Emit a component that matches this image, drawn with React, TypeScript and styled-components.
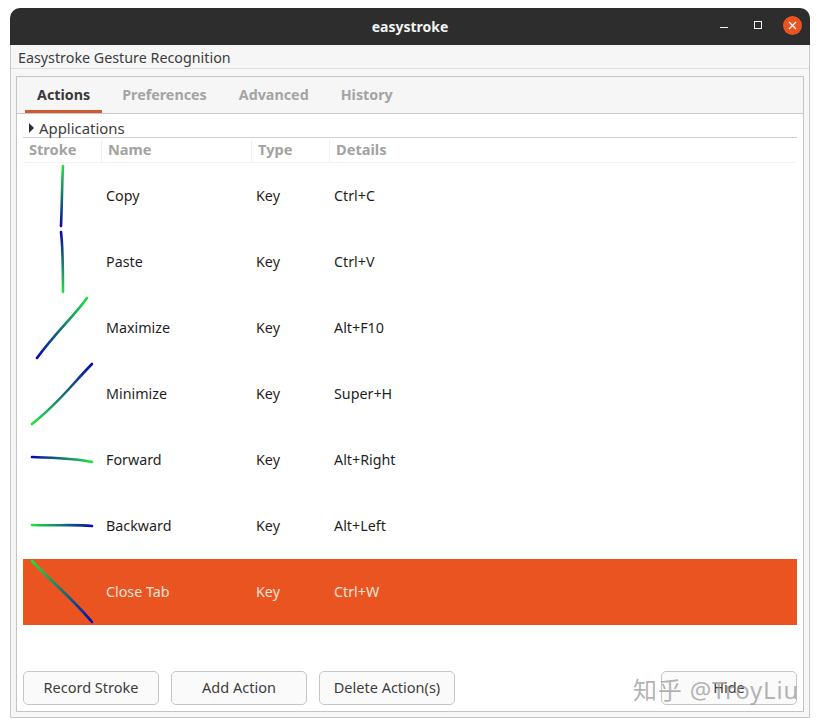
import styled, { createGlobalStyle } from "styled-components";

const GlobalStyle = createGlobalStyle`
  html, body {
    margin: 0;
    padding: 0;
    background: #ffffff;
    font-family: "Noto Sans", "Open Sans", sans-serif;
  }
`;

const Page = styled.div`
  position: relative;
  width: 820px;
  height: 728px;
  padding: 8px 10px 10px;
  box-sizing: border-box;
`;

const Window = styled.div`
  display: flex;
  flex-direction: column;
  height: 710px;
  box-sizing: border-box;
  background: #f6f6f6;
  border: 1px solid #c9c9c9;
  border-top: none;
  border-radius: 12px 12px 0 0;
`;

const TitleBar = styled.div`
  position: relative;
  flex: 0 0 37px;
  margin: 0 -1px;
  display: flex;
  align-items: center;
  justify-content: center;
  background: #2d2d2d;
  border-radius: 10px 10px 0 0;
  color: #f2f2f2;
  font-size: 14px;
  font-weight: 700;
`;

const WindowControls = styled.div`
  position: absolute;
  right: 8px;
  top: 8px;
  display: flex;
  align-items: center;
  gap: 15px;
`;

const ControlButton = styled.div`
  width: 19px;
  height: 19px;
  display: flex;
  align-items: center;
  justify-content: center;
`;

const CloseButton = styled(ControlButton)`
  background: #e95420;
  border-radius: 50%;
`;

const MenuBar = styled.div`
  flex: 0 0 24px;
  min-height: 0;
  box-sizing: border-box;
  padding-left: 7px;
  border-bottom: 1px solid #dfdfdf;
  color: #3d3d3d;
  font-size: 14.3px;
  line-height: 25px;
`;

const Notebook = styled.div`
  flex: 1;
  display: flex;
  flex-direction: column;
  margin: 7px 5px 5px;
  border: 1px solid #c4c4c4;
  background: #ffffff;
`;

const TabBar = styled.div`
  flex: 0 0 36px;
  display: flex;
  padding-left: 8px;
  background: #f6f6f6;
  border-bottom: 1px solid #c8c8c8;
`;

const Tab = styled.div<{ $active?: boolean }>`
  box-sizing: border-box;
  height: 36px;
  margin-right: ${({ $active }) => ($active ? "4px" : "0")};
  padding: 0 ${({ $active }) => ($active ? "12px" : "16px")};
  border-bottom: 3px solid ${({ $active }) => ($active ? "#cf5a2e" : "transparent")};
  color: ${({ $active }) => ($active ? "#3a3a3a" : "#a4a4a4")};
  font-size: 14.3px;
  font-weight: 700;
  line-height: 35px;
`;

const Content = styled.div`
  flex: 1;
  display: flex;
  flex-direction: column;
  padding: 5px 6px 6px;
`;

const Expander = styled.div`
  display: flex;
  align-items: center;
  gap: 5px;
  height: 18px;
  padding-left: 6px;
  border-bottom: 1px solid #d2d2d2;
  color: #3d3d3d;
  font-size: 14.9px;
`;

const Arrow = styled.span`
  width: 0;
  height: 0;
  border-left: 5px solid #2d2d2d;
  border-top: 5px solid transparent;
  border-bottom: 5px solid transparent;
`;

const ActionsTable = styled.div`
  flex: 1;
  margin-top: 2px;
`;

const HeaderRow = styled.div`
  display: grid;
  grid-template-columns: 79px 150px 78px 1fr;
  height: 23px;
  box-sizing: border-box;
  border-bottom: 1px solid #f2f2f2;
`;

const HeaderCell = styled.div`
  padding-left: 6px;
  border-right: 1px solid #f0f0f0;
  color: #a2a2a2;
  font-size: 14.6px;
  font-weight: 700;
  line-height: 18px;
  &:last-child {
    border-right: none;
  }
`;

const Row = styled.div<{ $selected?: boolean }>`
  display: grid;
  grid-template-columns: 83px 150px 78px 1fr;
  height: 66px;
  align-items: center;
  background: ${({ $selected }) => ($selected ? "#e95420" : "transparent")};
  color: ${({ $selected }) => ($selected ? "#f7e3d9" : "#1f1f1f")};
  font-size: 14.3px;
`;

const Cell = styled.div`
  margin-bottom: 2px;
`;

const StrokeCanvas = styled.svg`
  display: block;
  width: 83px;
  height: 66px;
`;

const ButtonBar = styled.div`
  display: flex;
  gap: 12px;
`;

const Button = styled.div<{ $end?: boolean }>`
  box-sizing: border-box;
  width: 136px;
  height: 34px;
  margin-left: ${({ $end }) => ($end ? "auto" : "0")};
  border: 1px solid #c6c6c6;
  border-radius: 5px;
  background: #fafafa;
  color: #3d3d3d;
  font-size: 14.5px;
  line-height: 30px;
  text-align: center;
`;

const Watermark = styled.div`
  position: absolute;
  left: 633px;
  top: 672px;
  color: rgba(150, 150, 150, 0.72);
  font-family: "Noto Sans", "Noto Sans CJK SC", sans-serif;
  font-size: 24px;
  letter-spacing: 0.8px;
  line-height: 36px;
  white-space: nowrap;
  pointer-events: none;
`;

type Point = [number, number];

type Action = {
  name: string;
  details: string;
  path: string;
  from: Point;
  to: Point;
  startsBlue?: boolean;
  selected?: boolean;
};

const actions: Action[] = [
  { name: "Copy", details: "Ctrl+C", path: "M40 3 C39 20 39 40 38 63", from: [40, 3], to: [38, 63] },
  { name: "Paste", details: "Ctrl+V", path: "M38 3 C40 20 40 40 40 63", from: [38, 3], to: [40, 63], startsBlue: true },
  { name: "Maximize", details: "Alt+F10", path: "M64 3 C52 20 34 36 14 63", from: [64, 3], to: [14, 63] },
  { name: "Minimize", details: "Super+H", path: "M69 3 C50 22 36 42 9 63", from: [69, 3], to: [9, 63], startsBlue: true },
  { name: "Forward", details: "Alt+Right", path: "M9 30 C30 31 50 31 69 35", from: [9, 30], to: [69, 35], startsBlue: true },
  { name: "Backward", details: "Alt+Left", path: "M9 32 C30 33 50 31 69 33", from: [9, 32], to: [69, 33] },
  { name: "Close Tab", details: "Ctrl+W", path: "M9 2 C28 22 50 40 69 63", from: [9, 2], to: [69, 63], selected: true },
];

const GREEN = "#20e23c";
const BLUE = "#0808b0";

const Stroke = ({ id, action }: { id: string; action: Action }) => (
  <StrokeCanvas viewBox="0 0 83 66">
    <defs>
      <linearGradient
        id={id}
        gradientUnits="userSpaceOnUse"
        x1={action.from[0]}
        y1={action.from[1]}
        x2={action.to[0]}
        y2={action.to[1]}
      >
        <stop offset="0" stopColor={action.startsBlue ? BLUE : GREEN} />
        <stop offset="1" stopColor={action.startsBlue ? GREEN : BLUE} />
      </linearGradient>
    </defs>
    <path d={action.path} fill="none" stroke={`url(#${id})`} strokeWidth="2.6" strokeLinecap="round" />
  </StrokeCanvas>
);

export default function App() {
  return (
    <Page>
      <GlobalStyle />
      <Window>
        <TitleBar>
          easystroke
          <WindowControls>
            <ControlButton>
              <svg width="9" height="9" viewBox="0 0 9 9">
                <rect x="0" y="6" width="8" height="1" fill="#f2f2f2" />
              </svg>
            </ControlButton>
            <ControlButton>
              <svg width="9" height="9" viewBox="0 0 9 9">
                <rect x="0.5" y="0.5" width="7" height="7" fill="none" stroke="#f2f2f2" strokeWidth="1" />
              </svg>
            </ControlButton>
            <CloseButton>
              <svg width="9" height="9" viewBox="0 0 9 9">
                <path d="M1 1 L8 8 M8 1 L1 8" stroke="#ffffff" strokeWidth="1.2" />
              </svg>
            </CloseButton>
          </WindowControls>
        </TitleBar>
        <MenuBar>Easystroke Gesture Recognition</MenuBar>
        <Notebook>
          <TabBar>
            <Tab $active>Actions</Tab>
            <Tab>Preferences</Tab>
            <Tab>Advanced</Tab>
            <Tab>History</Tab>
          </TabBar>
          <Content>
            <Expander>
              <Arrow />
              Applications
            </Expander>
            <ActionsTable>
              <HeaderRow>
                <HeaderCell>Stroke</HeaderCell>
                <HeaderCell>Name</HeaderCell>
                <HeaderCell>Type</HeaderCell>
                <HeaderCell>Details</HeaderCell>
              </HeaderRow>
              {actions.map((action, index) => (
                <Row key={action.name} $selected={action.selected}>
                  <Stroke id={`stroke-${index}`} action={action} />
                  <Cell>{action.name}</Cell>
                  <Cell>Key</Cell>
                  <Cell>{action.details}</Cell>
                </Row>
              ))}
            </ActionsTable>
            <ButtonBar>
              <Button>Record Stroke</Button>
              <Button>Add Action</Button>
              <Button>Delete Action(s)</Button>
              <Button $end>Hide</Button>
            </ButtonBar>
          </Content>
        </Notebook>
      </Window>
      <Watermark>知乎 @TroyLiu</Watermark>
    </Page>
  );
}
